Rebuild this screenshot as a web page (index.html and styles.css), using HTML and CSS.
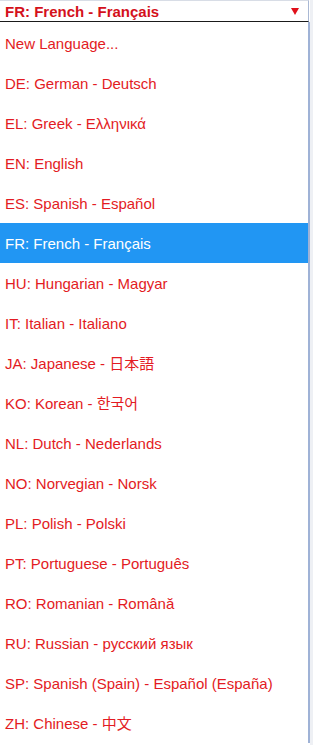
FILE: index.html
```html
<!DOCTYPE html>
<html lang="en">
<head>
<meta charset="UTF-8">
<meta name="viewport" content="width=device-width, initial-scale=1.0">
<title>Language Select</title>
<link rel="stylesheet" href="styles.css">
</head>
<body>

<div class="page">
  <!-- Selected language -->
  <div class="lang-select">
    <span class="lang-current">FR: French - Français</span>
    <span class="lang-arrow"></span>
  </div>

  <!-- Dropdown list -->
  <ul class="lang-list">
    <li>New Language...</li>
    <li>DE: German - Deutsch</li>
    <li>EL: Greek - Ελληνικά</li>
    <li>EN: English</li>
    <li>ES: Spanish - Español</li>
    <li class="active">FR: French - Français</li>
    <li>HU: Hungarian - Magyar</li>
    <li>IT: Italian - Italiano</li>
    <li>JA: Japanese - 日本語</li>
    <li>KO: Korean - 한국어</li>
    <li>NL: Dutch - Nederlands</li>
    <li>NO: Norvegian - Norsk</li>
    <li>PL: Polish - Polski</li>
    <li>PT: Portuguese - Português</li>
    <li>RO: Romanian - Română</li>
    <li>RU: Russian - русский язык</li>
    <li>SP: Spanish (Spain) - Español (España)</li>
    <li>ZH: Chinese - 中文</li>
  </ul>
</div>

</body>
</html>
```

FILE: styles.css
```css
body {
  margin: 0;
  font-family: Arial, "Liberation Sans", "Noto Sans CJK JP", sans-serif;
  background-color: #fff;
  overflow: hidden;
}

.page {
  width: 313px;
  height: 745px;
  background: linear-gradient(to right, #fff 0, #fff 310px, #eef0f4 310px);
}

/* Selected language */
.lang-select {
  width: 309px;
  height: 22px;
  box-sizing: border-box;
  display: flex;
  align-items: center;
  justify-content: space-between;
  padding: 0 9px 0 5px;
  background-color: #fff;
  border-top: 1px solid #d8dde6;
  border-right: 1px solid #a9b8d4;
  border-bottom: 1px solid #1a1a1a;
}

.lang-current {
  font-size: 15px;
  font-weight: bold;
  color: #d4111c;
}

.lang-arrow {
  width: 0;
  height: 0;
  border-left: 4px solid transparent;
  border-right: 4px solid transparent;
  border-top: 7px solid #e0101a;
  margin-top: 1px;
}

/* Dropdown list */
.lang-list {
  list-style: none;
  margin: 0;
  padding: 1px 0 0;
  width: 310px;
  box-sizing: border-box;
  border-right: 2px solid #9fb2d6;
  background-color: #fff;
}

.lang-list li {
  height: 40px;
  line-height: 41px;
  padding-left: 5px;
  font-size: 15px;
  color: #e31b23;
  white-space: nowrap;
}

.lang-list li.active {
  background-color: #2196f3;
  color: #fff;
}
```
